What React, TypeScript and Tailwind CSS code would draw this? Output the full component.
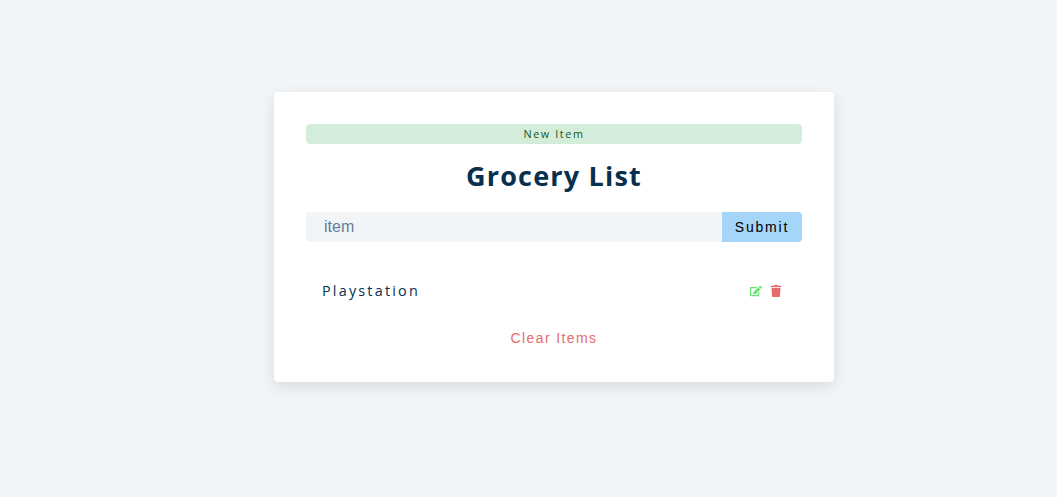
import { FaEdit, FaTrash } from "react-icons/fa";

export default function App() {
  return (
    <div className="min-h-[497px] bg-[#f1f5f8] pt-[92px] font-['Open_Sans',sans-serif] text-[#06304e]">
      <div className="ml-[274px] w-[560px] h-[290px] rounded bg-white p-8 shadow-[0_5px_15px_rgba(0,0,0,0.1)]">
        <p className="h-5 rounded bg-[#d4edda] text-center text-[10.8px] leading-5 tracking-[1.6px] text-[#155724]">
          New Item
        </p>
        <h3 className="mt-3 mb-4 text-center text-[27px] leading-[40px] font-bold tracking-[1.2px]">
          Grocery List
        </h3>
        <form className="flex h-[30px]">
          <input
            placeholder="item"
            className="min-w-0 flex-1 rounded-l bg-[#f1f5f8] pl-[18px] font-['Liberation_Sans',sans-serif] text-base outline-none placeholder:text-[#617d98]"
          />
          <button
            type="button"
            className="w-20 rounded-r bg-[#a5d5f8] text-center font-['Liberation_Sans',sans-serif] text-sm tracking-[1.8px] text-black"
          >
            Submit
          </button>
        </form>
        <div className="mt-8 flex h-[34px] items-center justify-between pl-4 pr-5">
          <p className="text-[14.4px] tracking-[2.2px]">Playstation</p>
          <div className="flex items-center gap-2 text-xs">
            <FaEdit className="text-[#67e66f]" />
            <FaTrash className="text-[#e66b6b]" />
          </div>
        </div>
        <button
          type="button"
          className="mx-auto mt-5 block font-['Liberation_Sans',sans-serif] text-sm tracking-[1.4px] text-[#e66b6d]"
        >
          Clear Items
        </button>
      </div>
    </div>
  );
}
